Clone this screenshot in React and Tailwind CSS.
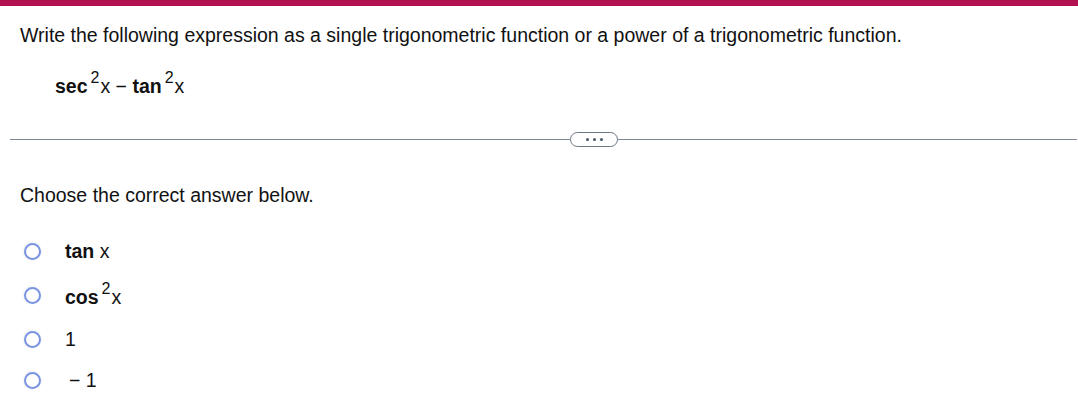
import React from "react";

function Radio() {
  return (
    <span className="flex h-[20px] w-[20px] items-center justify-center rounded-full bg-[#f8f8f8]">
      <span className="h-[17px] w-[17px] rounded-full border-2 border-[#7a94e2] bg-white" />
    </span>
  );
}

function Sup({ children }) {
  return <sup className="relative top-[-2px] ml-[3px] mr-[1px] text-[16px] font-normal align-super leading-none">{children}</sup>;
}

const options = [
  { key: "a", body: <><b>tan</b> x</> },
  { key: "b", body: <><b>cos</b><Sup>2</Sup>x</> },
  { key: "c", body: <>1</> },
  { key: "d", body: <span className="ml-[4px]">− 1</span> },
];

export default function App() {
  return (
    <div className="w-[1078px] h-[403px] bg-white text-[#111] font-['Liberation_Sans',Arial,sans-serif] overflow-hidden">
      <div className="h-[6px] bg-[#b1124f]" />
      <div className="px-[20px] pt-[18px]">
        <p className="text-[19.5px] leading-[22px]">
          Write the following expression as a single trigonometric function or a power of a trigonometric function.
        </p>
        <p className="mt-[26px] ml-[35px] h-[22px] text-[19.5px] leading-[22px]">
          <b>sec</b><Sup>2</Sup>x − <b>tan</b><Sup>2</Sup>x
        </p>
      </div>
      <div className="mt-[38px] ml-[10px] mr-[1px] flex items-center">
        <div className="h-px w-[560px] bg-[#7d8795]" />
        <span className="flex h-[15px] w-[48px] items-center justify-center gap-[4px] rounded-full border border-[#6c7683] bg-white">
          <span className="h-[3px] w-[3px] rounded-full bg-[#4b5563]" />
          <span className="h-[3px] w-[3px] rounded-full bg-[#4b5563]" />
          <span className="h-[3px] w-[3px] rounded-full bg-[#4b5563]" />
        </span>
        <div className="h-px flex-1 bg-[#7d8795]" />
      </div>
      <p className="mt-[37px] ml-[20px] text-[19.5px] leading-[22px]">Choose the correct answer below.</p>
      <div className="mt-[34px] ml-[22px] flex flex-col gap-[22px]">
        {options.map((o, i) => (
          <label key={o.key} className={"flex h-[22px] items-center text-[19.5px] leading-[22px]" + (i === 3 ? " -mt-[3px]" : "")}>
            <Radio />
            <span className="ml-[23px]">{o.body}</span>
          </label>
        ))}
      </div>
    </div>
  );
}
